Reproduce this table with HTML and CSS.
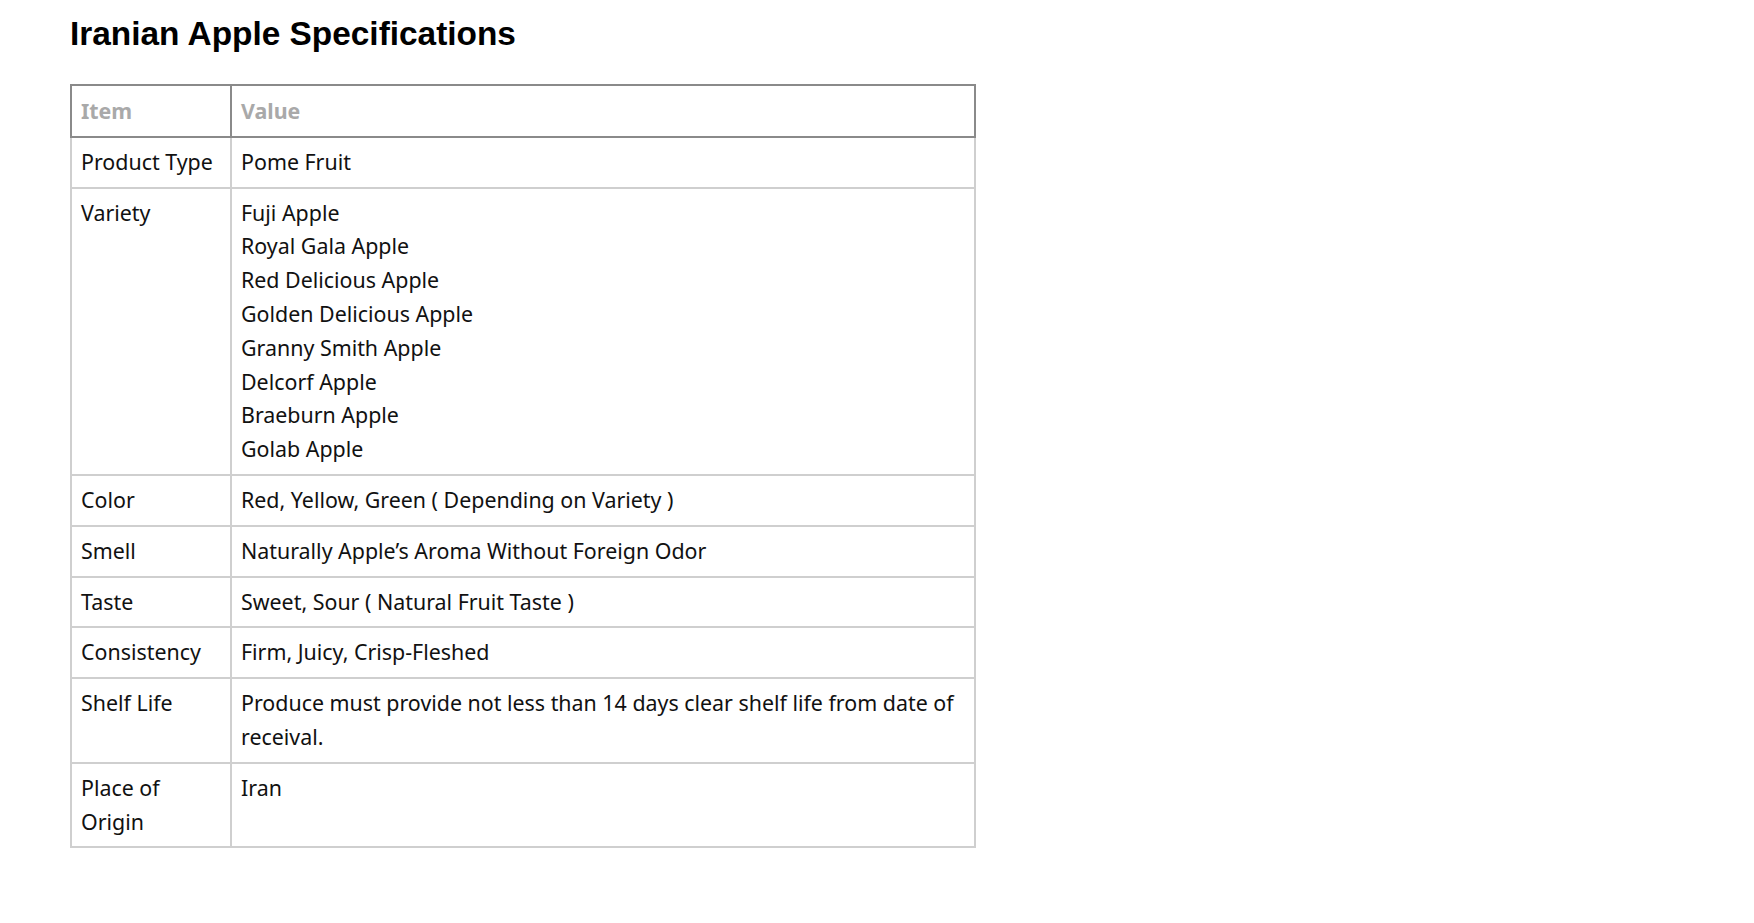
FILE: index.html
```html
<!DOCTYPE html>
<html lang="en">
<head>
<meta charset="utf-8">
<title>Iranian Apple Specifications</title>
<link rel="stylesheet" href="styles.css">
</head>
<body>
<main class="page">
  <h1 class="title">Iranian Apple Specifications</h1>
  <table class="spec">
    <colgroup>
      <col class="col-item">
      <col class="col-value">
    </colgroup>
    <thead>
      <tr><th>Item</th><th>Value</th></tr>
    </thead>
    <tbody>
      <tr><td>Product Type</td><td>Pome Fruit</td></tr>
      <tr><td>Variety</td><td>Fuji Apple<br>Royal Gala Apple<br>Red Delicious Apple<br>Golden Delicious Apple<br>Granny Smith Apple<br>Delcorf Apple<br>Braeburn Apple<br>Golab Apple</td></tr>
      <tr><td>Color</td><td>Red, Yellow, Green ( Depending on Variety )</td></tr>
      <tr><td>Smell</td><td>Naturally Apple’s Aroma Without Foreign Odor</td></tr>
      <tr><td>Taste</td><td>Sweet, Sour ( Natural Fruit Taste )</td></tr>
      <tr><td>Consistency</td><td>Firm, Juicy, Crisp-Fleshed</td></tr>
      <tr><td>Shelf Life</td><td>Produce must provide not less than 14 days clear shelf life from date of receival.</td></tr>
      <tr><td>Place of Origin</td><td>Iran</td></tr>
    </tbody>
  </table>
</main>
</body>
</html>
```

FILE: styles.css
```css
html, body {
  margin: 0;
  padding: 0;
  background: #ffffff;
}

.page {
  padding: 15px 0 0 70px;
}

.title {
  margin: 0 0 31px 0;
  font-family: "Liberation Sans", Arial, sans-serif;
  font-weight: bold;
  font-size: 33.4px;
  color: #000000;
}

.spec {
  border-collapse: collapse;
  width: 906px;
  table-layout: fixed;
  font-family: "Noto Sans", "Open Sans", sans-serif;
  font-size: 21.4px;
  line-height: 33.8px;
  color: #111111;
}

.col-item {
  width: 160px;
}

.spec th,
.spec td {
  text-align: left;
  vertical-align: top;
  padding: 7px 9px 8px 9px;
}

.spec th {
  border: 2px solid #8a8a8a;
  color: #a9a9a9;
  font-weight: bold;
  padding-top: 8px;
}

.spec td {
  border: 2px solid #cfcfcf;
}
```
